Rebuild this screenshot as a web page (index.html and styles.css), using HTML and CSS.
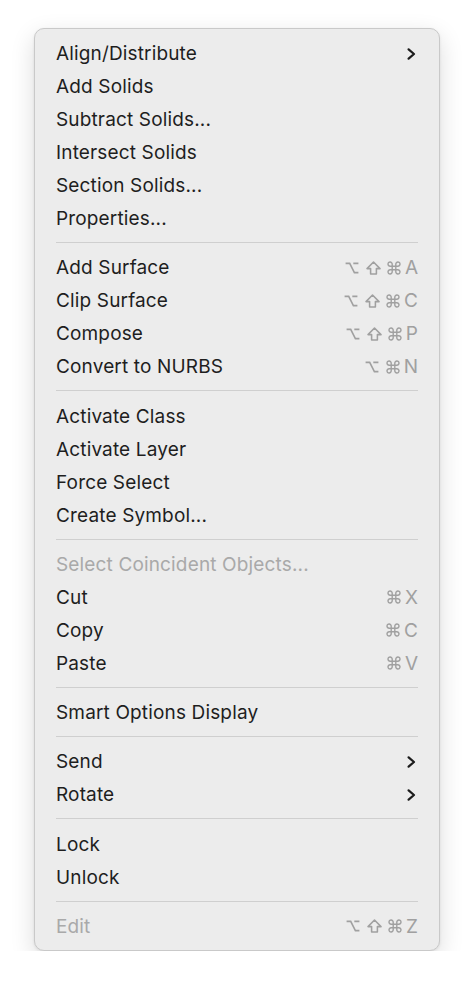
FILE: index.html
```html
<!DOCTYPE html>
<html>
<head>
<meta charset="utf-8">
<link rel="stylesheet" href="styles.css">
</head>
<body>
<svg width="0" height="0" class="defs">
  <defs>
    <symbol id="opt" viewBox="0 0 14 12"><path d="M0.6 1.4 H4.7 L9.4 10.6 H13.4 M8.3 1.4 H13.4" fill="none" stroke="currentColor" stroke-width="1.6" stroke-linejoin="miter"/></symbol>
    <symbol id="shift" viewBox="0 0 15 14"><path d="M7.5 1 L14 7.6 H10.4 V13 H4.6 V7.6 H1 Z" fill="none" stroke="currentColor" stroke-width="1.55" stroke-linejoin="round"/></symbol>
    <symbol id="cmd" viewBox="0 0 14 14"><path d="M5.2 5.2 V3.2 A2.1 2.1 0 1 0 3.2 5.2 H10.8 A2.1 2.1 0 1 0 8.8 3.2 V10.8 A2.1 2.1 0 1 0 10.8 8.8 H3.2 A2.1 2.1 0 1 0 5.2 10.8 Z" fill="none" stroke="currentColor" stroke-width="1.4"/></symbol>
    <symbol id="chev" viewBox="0 0 9 12"><path d="M1.6 1.3 L7 6 L1.6 10.7" fill="none" stroke="#1c1c1c" stroke-width="2.2" stroke-linecap="round" stroke-linejoin="round"/></symbol>
  </defs>
</svg>
<div class="menu">
  <div class="item"><span class="label">Align/Distribute</span><svg class="chev" width="9" height="12"><use href="#chev"/></svg></div>
  <div class="item"><span class="label">Add Solids</span></div>
  <div class="item"><span class="label">Subtract Solids...</span></div>
  <div class="item"><span class="label">Intersect Solids</span></div>
  <div class="item"><span class="label">Section Solids...</span></div>
  <div class="item"><span class="label">Properties...</span></div>
  <div class="sep"></div>
  <div class="item"><span class="label">Add Surface</span><span class="keys"><svg class="k-opt" width="14" height="12"><use href="#opt"/></svg><svg class="k-shift" width="15" height="14"><use href="#shift"/></svg><svg class="k-cmd" width="14" height="14"><use href="#cmd"/></svg><span class="kl">A</span></span></div>
  <div class="item"><span class="label">Clip Surface</span><span class="keys"><svg class="k-opt" width="14" height="12"><use href="#opt"/></svg><svg class="k-shift" width="15" height="14"><use href="#shift"/></svg><svg class="k-cmd" width="14" height="14"><use href="#cmd"/></svg><span class="kl">C</span></span></div>
  <div class="item"><span class="label">Compose</span><span class="keys"><svg class="k-opt" width="14" height="12"><use href="#opt"/></svg><svg class="k-shift" width="15" height="14"><use href="#shift"/></svg><svg class="k-cmd" width="14" height="14"><use href="#cmd"/></svg><span class="kl">P</span></span></div>
  <div class="item"><span class="label">Convert to NURBS</span><span class="keys"><svg class="k-opt" width="14" height="12"><use href="#opt"/></svg><svg class="k-cmd" width="14" height="14"><use href="#cmd"/></svg><span class="kl">N</span></span></div>
  <div class="sep"></div>
  <div class="item"><span class="label">Activate Class</span></div>
  <div class="item"><span class="label">Activate Layer</span></div>
  <div class="item"><span class="label">Force Select</span></div>
  <div class="item"><span class="label">Create Symbol...</span></div>
  <div class="sep"></div>
  <div class="item disabled"><span class="label">Select Coincident Objects...</span></div>
  <div class="item"><span class="label">Cut</span><span class="keys"><svg class="k-cmd" width="14" height="14"><use href="#cmd"/></svg><span class="kl">X</span></span></div>
  <div class="item"><span class="label">Copy</span><span class="keys"><svg class="k-cmd" width="14" height="14"><use href="#cmd"/></svg><span class="kl">C</span></span></div>
  <div class="item"><span class="label">Paste</span><span class="keys"><svg class="k-cmd" width="14" height="14"><use href="#cmd"/></svg><span class="kl">V</span></span></div>
  <div class="sep"></div>
  <div class="item"><span class="label">Smart Options Display</span></div>
  <div class="sep"></div>
  <div class="item"><span class="label">Send</span><svg class="chev" width="9" height="12"><use href="#chev"/></svg></div>
  <div class="item"><span class="label">Rotate</span><svg class="chev" width="9" height="12"><use href="#chev"/></svg></div>
  <div class="sep"></div>
  <div class="item"><span class="label">Lock</span></div>
  <div class="item"><span class="label">Unlock</span></div>
  <div class="sep"></div>
  <div class="item disabled"><span class="label">Edit</span><span class="keys"><svg class="k-opt" width="14" height="12"><use href="#opt"/></svg><svg class="k-shift" width="15" height="14"><use href="#shift"/></svg><svg class="k-cmd" width="14" height="14"><use href="#cmd"/></svg><span class="kl">Z</span></span></div>
</div>
</body>
</html>
```

FILE: styles.css
```css
html, body {
  margin: 0;
  padding: 0;
  background: #ffffff;
}
body {
  padding: 28px 0 0 34px;
  font-family: Inter, "Noto Sans", sans-serif;
}
.defs {
  position: absolute;
  width: 0;
  height: 0;
  overflow: hidden;
}
.menu {
  width: 404px;
  background: #ececec;
  border: 1px solid #c9c9c9;
  border-radius: 10px;
  padding: 8px 0 7px 0;
  box-shadow: 0 8px 24px rgba(0, 0, 0, 0.14), 0 1px 3px rgba(0, 0, 0, 0.08);
}
.item {
  height: 33px;
  display: flex;
  align-items: center;
  justify-content: space-between;
  padding: 0 21px 0 21px;
  font-size: 19px;
  letter-spacing: 0.15px;
  color: #1e1e1e;
}
.item.disabled {
  color: #a9a9a9;
}
.sep {
  height: 1px;
  background: #cfcfcf;
  margin: 7px 21px 8.25px 21px;
}
.keys {
  display: flex;
  align-items: center;
  color: #a0a0a0;
  font-size: 19px;
  letter-spacing: 0;
}
.k-opt {
  margin-right: 7px;
}
.k-shift {
  margin-right: 6px;
}
.k-cmd {
  margin-right: 4px;
}
.kl {
  font-family: Inter, sans-serif;
}
.chev {
  margin-right: 2px;
}
```
